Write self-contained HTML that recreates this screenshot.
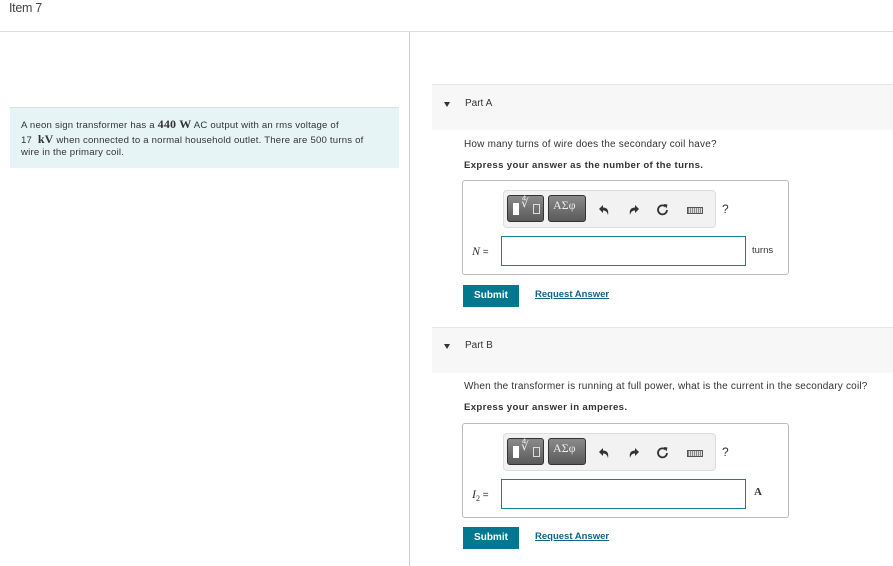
<!DOCTYPE html>
<html><head><meta charset="utf-8"><style>
*{margin:0;padding:0;box-sizing:border-box}
body{width:893px;height:566px;background:#fff;font-family:"Liberation Sans",Arial,sans-serif;color:#333;position:relative;overflow:hidden}
.a{position:absolute}
.s{font-size:10px;letter-spacing:0.2px;color:#333;white-space:nowrap}
.b{font-weight:bold;font-size:9.6px;letter-spacing:0.35px}
.hdr{background:#f7f7f7;border-top:1px solid #e5e5e5;left:432px;width:461px;height:46px}
.tri{width:0;height:0;border-left:3.5px solid transparent;border-right:3.5px solid transparent;border-top:5px solid #333}
.box{border:1px solid #bbb;border-radius:3px;left:462px;width:327px;height:95px}
.tb{background:#f2f2f2;border:1px solid #ddd;border-radius:4px;left:40px;top:9px;width:213px;height:38px}
.btn{background:linear-gradient(#8a8a8a,#5a5a5a);border:1px solid #333;border-radius:3px;height:27px;top:4px;color:#eee;font-family:"Liberation Serif",serif;font-size:12px}
.inp{border:1px solid #11809a;left:38px;width:245px;height:30px;background:#fff}
.sub{background:#00788f;color:#fff;font-weight:bold;font-size:10px;width:56px;height:22px;left:463px;text-align:center;line-height:22px}
.req{color:#11658a;text-decoration:underline;font-size:9.5px;font-weight:bold;left:535px}
</style></head><body>
<div class="a" style="left:9px;top:1px;font-size:12.5px;color:#444;letter-spacing:-0.3px">Item 7</div>
<div class="a" style="left:0;top:31px;width:893px;height:1px;background:#ddd"></div>
<div class="a" style="left:409px;top:32px;width:1px;height:534px;background:#ccc"></div>
<div class="a" style="left:10px;top:107px;width:389px;height:61px;background:#e6f4f6;border-top:1px solid #ddd"></div>
<div class="a s" style="left:21px;top:118px;line-height:12.5px;font-size:9.6px;letter-spacing:0.2px">A neon sign transformer has a <b style="font-family:'Liberation Serif',serif;font-size:12px">440 W</b> AC output with an rms voltage of<br>17 &nbsp;<b style="font-family:'Liberation Serif',serif;font-size:12px">kV</b> when connected to a normal household outlet. There are 500 turns of<br>wire in the primary coil.</div>

<div class="a hdr" style="top:84px"></div>
<div class="a tri" style="left:444px;top:102px"></div>
<div class="a" style="left:465px;top:98px;font-size:10px">Part A</div>
<div class="a s" style="left:464px;top:139px">How many turns of wire does the secondary coil have?</div>
<div class="a b" style="left:464px;top:160px">Express your answer as the number of the turns.</div>
<div class="a box" style="top:180px">
 <div class="a tb">
  <div class="a btn" style="left:3px;width:37px"><span style="position:absolute;left:5px;top:7px;width:6px;height:12px;background:#fff"></span><span style="position:absolute;left:13px;top:0px;font-size:12px">∜</span><span style="position:absolute;left:25px;top:8px;width:7px;height:10px;border:1px solid #ddd"></span></div>
  <div class="a btn" style="left:44px;width:38px;padding-left:4px;line-height:18px">ΑΣφ</div>
  <svg class="a" style="left:94px;top:13px" width="12" height="12" viewBox="0 0 12 12"><path d="M1 5 L5 1 L5 3.5 C9 3.5 11 6 10 11 C9 7.5 7.5 6.5 5 6.5 L5 9 Z" fill="#333"/></svg>
  <svg class="a" style="left:124px;top:13px" width="12" height="12" viewBox="0 0 12 12"><path d="M11 5 L7 1 L7 3.5 C3 3.5 1 6 2 11 C3 7.5 4.5 6.5 7 6.5 L7 9 Z" fill="#333"/></svg>
  <svg class="a" style="left:152px;top:12px" width="13" height="13" viewBox="0 0 13 13"><path d="M9.5 3.5 A4.5 4.5 0 1 0 11 7" fill="none" stroke="#333" stroke-width="1.8"/><path d="M7.5 1 L11.5 1.5 L10.5 5.5 Z" fill="#333"/></svg>
  <div class="a" style="left:183px;top:16px;width:16px;height:7px;border:1px solid #555;background:repeating-linear-gradient(90deg,#888 0 1px,#ddd 1px 2px)"></div>
  <div class="a" style="left:218px;top:11px;font-size:12px">?</div>
 </div>
 <div class="a" style="left:9px;top:63px;font-size:10px"><i style="font-family:'Liberation Serif',serif;font-size:12px">N</i> =</div>
 <div class="a inp" style="top:55px"></div>
 <div class="a" style="left:289px;top:64px;font-size:9.5px">turns</div>
</div>
<div class="a sub" style="top:285px">Submit</div>
<div class="a req" style="top:289px">Request Answer</div>

<div class="a hdr" style="top:327px"></div>
<div class="a tri" style="left:444px;top:344px"></div>
<div class="a" style="left:465px;top:340px;font-size:10px">Part B</div>
<div class="a s" style="left:464px;top:381px">When the transformer is running at full power, what is the current in the secondary coil?</div>
<div class="a b" style="left:464px;top:402px">Express your answer in amperes.</div>
<div class="a box" style="top:423px">
 <div class="a tb">
  <div class="a btn" style="left:3px;width:37px"><span style="position:absolute;left:5px;top:7px;width:6px;height:12px;background:#fff"></span><span style="position:absolute;left:13px;top:0px;font-size:12px">∜</span><span style="position:absolute;left:25px;top:8px;width:7px;height:10px;border:1px solid #ddd"></span></div>
  <div class="a btn" style="left:44px;width:38px;padding-left:4px;line-height:18px">ΑΣφ</div>
  <svg class="a" style="left:94px;top:13px" width="12" height="12" viewBox="0 0 12 12"><path d="M1 5 L5 1 L5 3.5 C9 3.5 11 6 10 11 C9 7.5 7.5 6.5 5 6.5 L5 9 Z" fill="#333"/></svg>
  <svg class="a" style="left:124px;top:13px" width="12" height="12" viewBox="0 0 12 12"><path d="M11 5 L7 1 L7 3.5 C3 3.5 1 6 2 11 C3 7.5 4.5 6.5 7 6.5 L7 9 Z" fill="#333"/></svg>
  <svg class="a" style="left:152px;top:12px" width="13" height="13" viewBox="0 0 13 13"><path d="M9.5 3.5 A4.5 4.5 0 1 0 11 7" fill="none" stroke="#333" stroke-width="1.8"/><path d="M7.5 1 L11.5 1.5 L10.5 5.5 Z" fill="#333"/></svg>
  <div class="a" style="left:183px;top:16px;width:16px;height:7px;border:1px solid #555;background:repeating-linear-gradient(90deg,#888 0 1px,#ddd 1px 2px)"></div>
  <div class="a" style="left:218px;top:11px;font-size:12px">?</div>
 </div>
 <div class="a" style="left:9px;top:63px;font-size:10px"><i style="font-family:'Liberation Serif',serif;font-size:12px">I</i><sub style="font-family:'Liberation Serif',serif;font-size:8px">2</sub> =</div>
 <div class="a inp" style="top:55px"></div>
 <div class="a" style="left:291px;top:62px;font-size:11px;font-weight:bold;font-family:'Liberation Serif',serif">A</div>
</div>
<div class="a sub" style="top:527px">Submit</div>
<div class="a req" style="top:531px">Request Answer</div>
</body></html>
